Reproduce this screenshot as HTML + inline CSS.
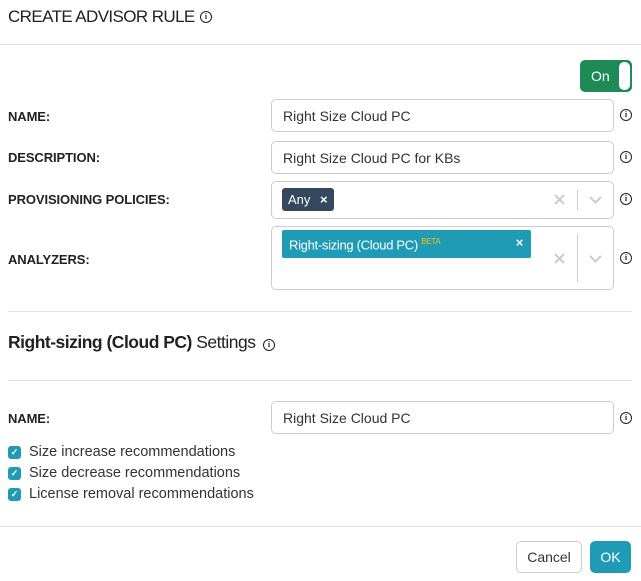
<!DOCTYPE html><html><head><style>
*{box-sizing:border-box;margin:0;padding:0}
body{width:641px;height:581px;background:#fff;font-family:"Liberation Sans",sans-serif;color:#222;position:relative;overflow:hidden}
.a{position:absolute}
.lbl{position:absolute;left:8px;font-size:13px;font-weight:bold;color:#222;letter-spacing:-0.1px}
.inp{position:absolute;left:271px;width:343px;border:1px solid #ccc;border-radius:5px;background:#fff;font-size:14px;color:#333}
.info{position:absolute;left:620px;width:12px;height:12px;border:1.3px solid #222;border-radius:50%;font-size:8px;font-weight:bold;text-align:center;line-height:10px;font-family:"Liberation Serif",serif}
.hr{position:absolute;height:1px;background:#e2e2e2}
.cb{position:absolute;left:8px;width:13px;height:13px;background:#1f9bb5;border-radius:3px;color:#fff;font-size:9px;text-align:center;line-height:13px;font-weight:bold}
.ct{position:absolute;left:29px;font-size:14.5px;color:#333}
</style></head><body>
<div class="a" style="left:8px;top:7px;font-size:17px;color:#222;letter-spacing:-0.6px">CREATE ADVISOR RULE</div>
<div class="info" style="left:200px;top:11px">i</div>
<div class="hr" style="left:0;top:44px;width:641px"></div>
<div class="a" style="left:580px;top:60px;width:52px;height:32px;background:#1e8a55;border-radius:5px"></div>
<div class="a" style="left:591px;top:68px;color:#fff;font-size:14px">On</div>
<div class="a" style="left:619px;top:62px;width:11px;height:28px;background:#fff;border-radius:5px"></div>

<div class="lbl" style="top:109px">NAME:</div>
<div class="inp" style="top:99px;height:33px;padding:8px 11px">Right Size Cloud PC</div>
<div class="info" style="top:109px">i</div>
<div class="lbl" style="top:150px">DESCRIPTION:</div>
<div class="inp" style="top:141px;height:33px;padding:8px 11px">Right Size Cloud PC for KBs</div>
<div class="info" style="top:151px">i</div>
<div class="lbl" style="top:192px">PROVISIONING POLICIES:</div>
<div class="inp" style="top:181px;height:38px"></div>
<div class="a" style="left:282px;top:188px;width:52px;height:23px;background:#34495e;border-radius:3px;color:#fff;font-size:13px;padding:4px 6px">Any <span style="margin-left:6px;font-weight:bold">×</span></div>
<svg class="a" style="left:554px;top:194px" width="11" height="11"><path d="M1 1L10 10M10 1L1 10" stroke="#ccc" stroke-width="2"/></svg>
<div class="a" style="left:577px;top:190px;width:1px;height:20px;background:#ccc"></div>
<svg class="a" style="left:589px;top:196px" width="13" height="8"><path d="M1 1L6.5 6.5L12 1" stroke="#ccc" stroke-width="2" fill="none"/></svg>
<div class="info" style="top:193px">i</div>
<div class="lbl" style="top:252px">ANALYZERS:</div>
<div class="inp" style="top:226px;height:64px"></div>
<div class="a" style="left:282px;top:230px;width:249px;height:28px;background:#1f9bb5;border-radius:2px;color:#fff;font-size:13px;padding:7px 7px;letter-spacing:-0.3px">Right-sizing (Cloud PC) <sup style="color:#f2c200;font-size:8px">BETA</sup><span style="position:absolute;right:8px;top:5px;font-weight:bold">×</span></div>
<svg class="a" style="left:554px;top:253px" width="11" height="11"><path d="M1 1L10 10M10 1L1 10" stroke="#ccc" stroke-width="2"/></svg>
<div class="a" style="left:577px;top:234px;width:1px;height:48px;background:#ccc"></div>
<svg class="a" style="left:589px;top:255px" width="13" height="8"><path d="M1 1L6.5 6.5L12 1" stroke="#ccc" stroke-width="2" fill="none"/></svg>
<div class="info" style="top:252px">i</div>
<div class="hr" style="left:8px;top:311px;width:624px"></div>
<div class="a" style="left:8px;top:332px;font-size:17.5px;color:#222;letter-spacing:-0.5px"><b>Right-sizing (Cloud PC)</b> Settings</div>
<div class="info" style="left:263px;top:339px">i</div>
<div class="hr" style="left:8px;top:380px;width:624px"></div>
<div class="lbl" style="top:411px">NAME:</div>
<div class="inp" style="top:401px;height:33px;padding:8px 11px">Right Size Cloud PC</div>
<div class="info" style="top:412px">i</div>
<div class="cb" style="top:446px">✓</div><div class="ct" style="top:444px">Size increase recommendations</div>
<div class="cb" style="top:467px">✓</div><div class="ct" style="top:465px">Size decrease recommendations</div>
<div class="cb" style="top:488px">✓</div><div class="ct" style="top:486px">License removal recommendations</div>
<div class="hr" style="left:0;top:526px;width:641px"></div>
<div class="a" style="left:516px;top:541px;width:66px;height:32px;border:1px solid #ccc;border-radius:5px;font-size:14px;text-align:center;line-height:30px;color:#333">Cancel</div>
<div class="a" style="left:590px;top:541px;width:41px;height:32px;background:#1f9bb5;border-radius:5px;font-size:14px;text-align:center;line-height:32px;color:#fff">OK</div>
</body></html>
